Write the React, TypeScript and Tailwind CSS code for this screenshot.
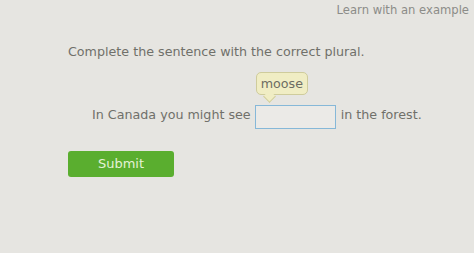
export default function App() {
  return (
    <div
      className="w-[474px] h-[253px] bg-[#e6e5e1] text-[#70706a] overflow-hidden"
      style={{ fontFamily: '"DejaVu Sans", Verdana, sans-serif' }}
    >
      {/* header link */}
      <div className="flex justify-end pr-[5px] pt-[2px]">
        <span className="text-[11.6px] leading-[16px] text-[#8c8c88]">Learn with an example</span>
      </div>

      {/* question */}
      <div className="pl-[68px] pt-[25px]">
        <p className="text-[12.7px] leading-[18px]">Complete the sentence with the correct plural.</p>

        <div className="flex items-end pl-[24px] mt-[11px]">
          <span className="text-[12.7px] leading-[18px] mb-[5px]">In Canada you might see</span>
          <div className="flex flex-col items-start ml-[4px]">
            {/* word tip */}
            <div className="relative ml-[1px] mb-[10px]">
              <div className="px-[4px] h-[23px] flex items-center rounded-[5px] border border-[#cfcc9c] bg-[#f0edc4] text-[12.7px] text-[#6c6c62]">
                moose
              </div>
              <div className="absolute left-[9px] -bottom-[6px] w-[9px] h-[9px] rotate-45 bg-[#f0edc4] border-r border-b border-[#cfcc9c]" />
            </div>
            <div className="w-[81px] h-[24px] border border-[#86b8d8] bg-[#ebeae7]" />
          </div>
          <span className="text-[12.7px] leading-[18px] mb-[5px] ml-[5px]">in the forest.</span>
        </div>

        <button className="mt-[22px] w-[106px] h-[26px] rounded-[3px] bg-[#5aae2f] text-[13px] text-[#e4f2d6] flex items-center justify-center">
          Submit
        </button>
      </div>
    </div>
  );
}
